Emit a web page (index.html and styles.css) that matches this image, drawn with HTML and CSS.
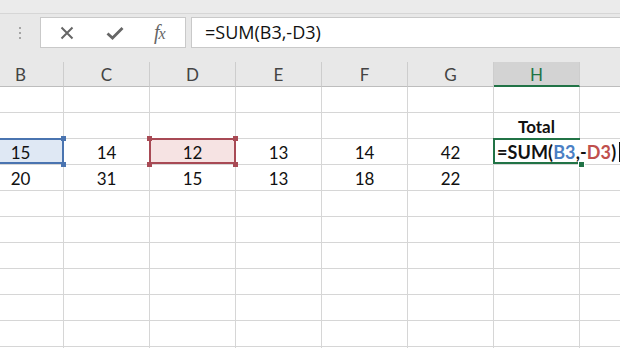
FILE: index.html
```html
<!DOCTYPE html>
<html lang="en">
<head>
    <meta charset="UTF-8">
    <title>Book1 - Excel</title>
    <link rel="stylesheet" href="styles.css">
</head>
<body>
    <div class="ribbon-edge"></div>

    <div class="formula-bar">
        <div class="grip"><i></i><i></i><i></i></div>
        <div class="fx-buttons">
            <svg class="icon" width="14" height="14" viewBox="0 0 14 14">
                <path d="M1.5 1.5 L12.5 12.5 M12.5 1.5 L1.5 12.5" stroke="#666" stroke-width="2" fill="none"/>
            </svg>
            <svg class="icon" width="18" height="14" viewBox="0 0 18 14">
                <path d="M1.5 7.5 L6.5 12 L16.5 2" stroke="#666" stroke-width="2.8" fill="none"/>
            </svg>
            <span class="fx">f<small>x</small></span>
        </div>
        <div class="formula-input">=SUM(B3,-D3)</div>
    </div>

    <div class="sheet">
        <!-- column headers -->
        <div class="col-head">B</div>
        <div class="col-head">C</div>
        <div class="col-head">D</div>
        <div class="col-head">E</div>
        <div class="col-head">F</div>
        <div class="col-head">G</div>
        <div class="col-head active">H</div>
        <div class="col-head"></div>

        <!-- row 1 -->
        <div class="cell"></div><div class="cell"></div><div class="cell"></div><div class="cell"></div>
        <div class="cell"></div><div class="cell"></div><div class="cell"></div><div class="cell"></div>

        <!-- row 2 -->
        <div class="cell"></div><div class="cell"></div><div class="cell"></div><div class="cell"></div>
        <div class="cell"></div><div class="cell"></div><div class="cell bold">Total</div><div class="cell"></div>

        <!-- row 3 -->
        <div class="cell ref-blue">15<span class="handle tr"></span><span class="handle br"></span></div>
        <div class="cell">14</div>
        <div class="cell ref-red">12<span class="handle tl"></span><span class="handle tr"></span><span class="handle bl"></span><span class="handle br"></span></div>
        <div class="cell">13</div>
        <div class="cell">14</div>
        <div class="cell">42</div>
        <div class="cell editing">=SUM(<span class="blue">B3</span>,-<span class="red">D3</span>)<span class="caret"></span><span class="fill-handle"></span></div>
        <div class="cell"></div>

        <!-- row 4 -->
        <div class="cell">20</div>
        <div class="cell">31</div>
        <div class="cell">15</div>
        <div class="cell">13</div>
        <div class="cell">18</div>
        <div class="cell">22</div>
        <div class="cell"></div>
        <div class="cell"></div>

        <!-- rows 5-11 -->
        <div class="cell"></div><div class="cell"></div><div class="cell"></div><div class="cell"></div>
        <div class="cell"></div><div class="cell"></div><div class="cell"></div><div class="cell"></div>

        <div class="cell"></div><div class="cell"></div><div class="cell"></div><div class="cell"></div>
        <div class="cell"></div><div class="cell"></div><div class="cell"></div><div class="cell"></div>

        <div class="cell"></div><div class="cell"></div><div class="cell"></div><div class="cell"></div>
        <div class="cell"></div><div class="cell"></div><div class="cell"></div><div class="cell"></div>

        <div class="cell"></div><div class="cell"></div><div class="cell"></div><div class="cell"></div>
        <div class="cell"></div><div class="cell"></div><div class="cell"></div><div class="cell"></div>

        <div class="cell"></div><div class="cell"></div><div class="cell"></div><div class="cell"></div>
        <div class="cell"></div><div class="cell"></div><div class="cell"></div><div class="cell"></div>

        <div class="cell"></div><div class="cell"></div><div class="cell"></div><div class="cell"></div>
        <div class="cell"></div><div class="cell"></div><div class="cell"></div><div class="cell"></div>

        <div class="cell"></div><div class="cell"></div><div class="cell"></div><div class="cell"></div>
        <div class="cell"></div><div class="cell"></div><div class="cell"></div><div class="cell"></div>
    </div>
</body>
</html>
```

FILE: styles.css
```css
body {
    margin: 0;
    width: 620px;
    height: 348px;
    overflow: hidden;
    background: #fff;
    font-family: Lato, "Liberation Sans", sans-serif;
}
.ribbon-edge {
    height: 13px;
    background: #ebebeb;
    border-bottom: 1px solid #d6d6d6;
}
.formula-bar {
    display: flex;
    align-items: stretch;
    gap: 5px;
    height: 31px;
    padding: 3px 0 14px 0;
    background: #e8e8e8;
}
.grip {
    width: 40px;
    display: flex;
    flex-direction: column;
    align-items: center;
    justify-content: center;
    gap: 3px;
    margin-right: -5px;
}
.grip i {
    display: block;
    width: 2px;
    height: 2px;
    background: #a5a5a5;
}
.fx-buttons {
    width: 144px;
    display: flex;
    align-items: center;
    background: #fff;
    border: 1px solid #c9c9c9;
}
.fx-buttons .icon:first-child { margin-left: 19px; }
.fx-buttons .icon:nth-child(2) { margin-left: 32px; }
.fx {
    margin-left: 30px;
    font-family: "Liberation Serif", serif;
    font-style: italic;
    font-size: 20px;
    color: #666;
    letter-spacing: -1px;
}
.fx small { font-size: 16px; }
.formula-input {
    flex: 1;
    background: #fff;
    border: 1px solid #c9c9c9;
    border-right: none;
    padding-left: 13px;
    font-family: "Open Sans", sans-serif;
    font-size: 18px;
    line-height: 29px;
    color: #111;
}
.sheet {
    display: grid;
    grid-template-columns: repeat(8, 86px);
    grid-template-rows: 25px;
    grid-auto-rows: 26px;
    margin-left: -22px;
}
.col-head {
    background: #e8e8e8;
    border-right: 1px solid #cdcdcd;
    border-bottom: 1px solid #bdbdbd;
    text-align: center;
    font-size: 17px;
    line-height: 25px;
    color: #444;
    box-sizing: border-box;
}
.col-head.active {
    background: #d3d3d3;
    color: #217346;
    border-bottom: 2px solid #217346;
}
.cell {
    position: relative;
    box-sizing: border-box;
    border-right: 1px solid #d6d6d6;
    border-bottom: 1px solid #d6d6d6;
    text-align: center;
    font-size: 17px;
    line-height: 27px;
    color: #111;
    white-space: nowrap;
}
.bold { font-weight: bold; }
.ref-blue { background: #dfe8f4; }
.ref-blue::after,
.ref-red::after {
    content: "";
    position: absolute;
    inset: -1px -1px 0 -1px;
    border: 2px solid #4a74b0;
}
.ref-red { background: #f6e3e3; }
.ref-red::after { border-color: #a84a55; }
.handle {
    position: absolute;
    width: 5px;
    height: 5px;
    background: #4a74b0;
    z-index: 2;
}
.ref-red .handle { background: #a84a55; }
.handle.tl { left: -3px; top: -3px; }
.handle.tr { right: -3px; top: -3px; }
.handle.bl { left: -3px; bottom: -3px; }
.handle.br { right: -3px; bottom: -3px; }
.editing {
    z-index: 1;
    text-align: left;
    font-weight: bold;
    font-size: 18px;
    letter-spacing: 0.1px;
    padding-left: 3px;
    border-right-color: transparent;
}
.editing::before {
    content: "";
    position: absolute;
    inset: -1px -1px 0 -1px;
    border: 2px solid #217346;
    border-right: none;
}
.editing .blue { color: #4a7fc4; }
.editing .red { color: #c0504d; }
.caret {
    display: inline-block;
    width: 1px;
    height: 20px;
    margin-left: 3px;
    vertical-align: -3px;
    background: #111;
}
.fill-handle {
    position: absolute;
    left: 84px;
    bottom: -4px;
    width: 5px;
    height: 5px;
    background: #217346;
    border: 1px solid #fff;
}
```
